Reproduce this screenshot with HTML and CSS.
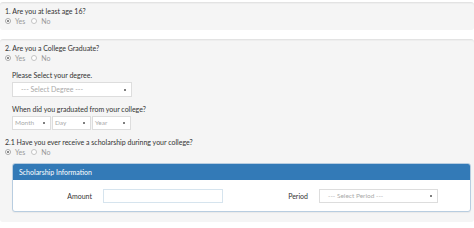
FILE: index.html
```
<!DOCTYPE html>
<html lang="en">
<head>
  <meta charset="UTF-8">
  <title>Questionnaire</title>
  <link rel="stylesheet" href="styles.css">
</head>
<body>
  <div class="well first">
    <p class="q">1. Are you at least age 16?</p>
    <div class="radios">
      <span class="radio on"></span><span class="opt">Yes</span>
      <span class="radio"></span><span class="opt">No</span>
    </div>
  </div>

  <div class="well second">
    <p class="q">2. Are you a College Graduate?</p>
    <div class="radios">
      <span class="radio on"></span><span class="opt">Yes</span>
      <span class="radio"></span><span class="opt">No</span>
    </div>

    <div class="sub">
      <p class="label">Please Select your degree.</p>
      <div class="select degree">--- Select Degree ---<span class="caret"></span></div>

      <p class="label when">When did you graduated from your college?</p>
      <div class="date-row">
        <div class="select small">Month<span class="caret"></span></div>
        <div class="select small">Day<span class="caret"></span></div>
        <div class="select small">Year<span class="caret"></span></div>
      </div>
    </div>

    <p class="q q21">2.1 Have you ever receive a scholarship durinng your college?</p>
    <div class="radios">
      <span class="radio on"></span><span class="opt">Yes</span>
      <span class="radio"></span><span class="opt">No</span>
    </div>

    <div class="panel">
      <div class="panel-heading">Scholarship Information</div>
      <div class="panel-body">
        <span class="field-label amount">Amount</span>
        <div class="input"></div>
        <span class="field-label period">Period</span>
        <div class="select period-select">--- Select Period ---<span class="caret"></span></div>
      </div>
    </div>
  </div>
</body>
</html>
```

FILE: styles.css
```
* { margin:0; padding:0; box-sizing:border-box; }
body {
  font-family: Lato, "Open Sans", sans-serif;
  font-size: 7px;
  color: #333;
  background: #fff;
  padding-top: 2px;
}
.well {
  background: #f5f5f5;
  border-top: 1px solid #e3e3e3;
  border-radius: 3px;
  padding: 3px 5px 0 5px;
  box-shadow: inset 0 1px 1px rgba(0,0,0,0.03);
}
.first { height: 28px; }
.second { margin-top: 9px; height: 183px; }
.q { color: #333; line-height: 10px; height: 10px; }
.radios { display:flex; align-items:center; height: 9px; color: #999; }
.radio {
  width: 6px; height: 6px; border-radius: 50%;
  border: 1px solid #c4c4c4; background: #fff; margin-right: 4px;
  position: relative;
}
.radio.on { border-color: #aaa; }
.radio.on::after {
  content: ""; position: absolute; left: 1px; top: 1px;
  width: 2px; height: 2px; border-radius: 50%; background: #666;
}
.opt { margin-right: 6px; }
.sub { padding-left: 7px; margin-top: 8px; }
.label { line-height: 10px; height: 10px; color: #333; }
.select {
  position: relative; background: #fff; border: 1px solid #ddd;
  color: #aaa; height: 15px; line-height: 13px; padding-left: 8px;
  font-size: 7px;
}
.degree { width: 120px; margin-top: 2px; }
.caret {
  position: absolute; right: 5px; top: 5.5px;
  width: 2px; height: 2px; background: #555; border-radius: 50%;
}
.when { margin-top: 7px; }
.date-row { display:flex; gap: 1px; margin-top: 2px; }
.small { width: 39px; padding-left: 2px; height: 14px; line-height: 12px; font-size: 6.5px; }
.small .caret { top: 5px; }
.q21 { margin-top: 7px; }
.panel {
  margin: 7px 0 0 7px;
  width: 459px;
  border: 1px solid #b8cde0;
  border-radius: 3px;
  background: #fff;
  box-shadow: 0 1px 1px rgba(0,0,0,0.05);
}
.panel-heading {
  background: #337ab7; color: #fff; height: 16px; line-height: 16px;
  padding-left: 6px; border-radius: 2px 2px 0 0;
}
.panel-body {
  height: 31px; display:flex; align-items:center;
}
.field-label { color: #333; text-align: right; }
.amount { width: 79px; }
.input {
  width: 120px; height: 14px; margin-left: 11px;
  border: 1px solid #d6e4ee; background: #fff;
}
.period { width: 85px; }
.period-select { width: 119px; margin-left: 11px; height: 14px; line-height: 12px; padding-left: 8px; font-size: 6.5px; }
```
